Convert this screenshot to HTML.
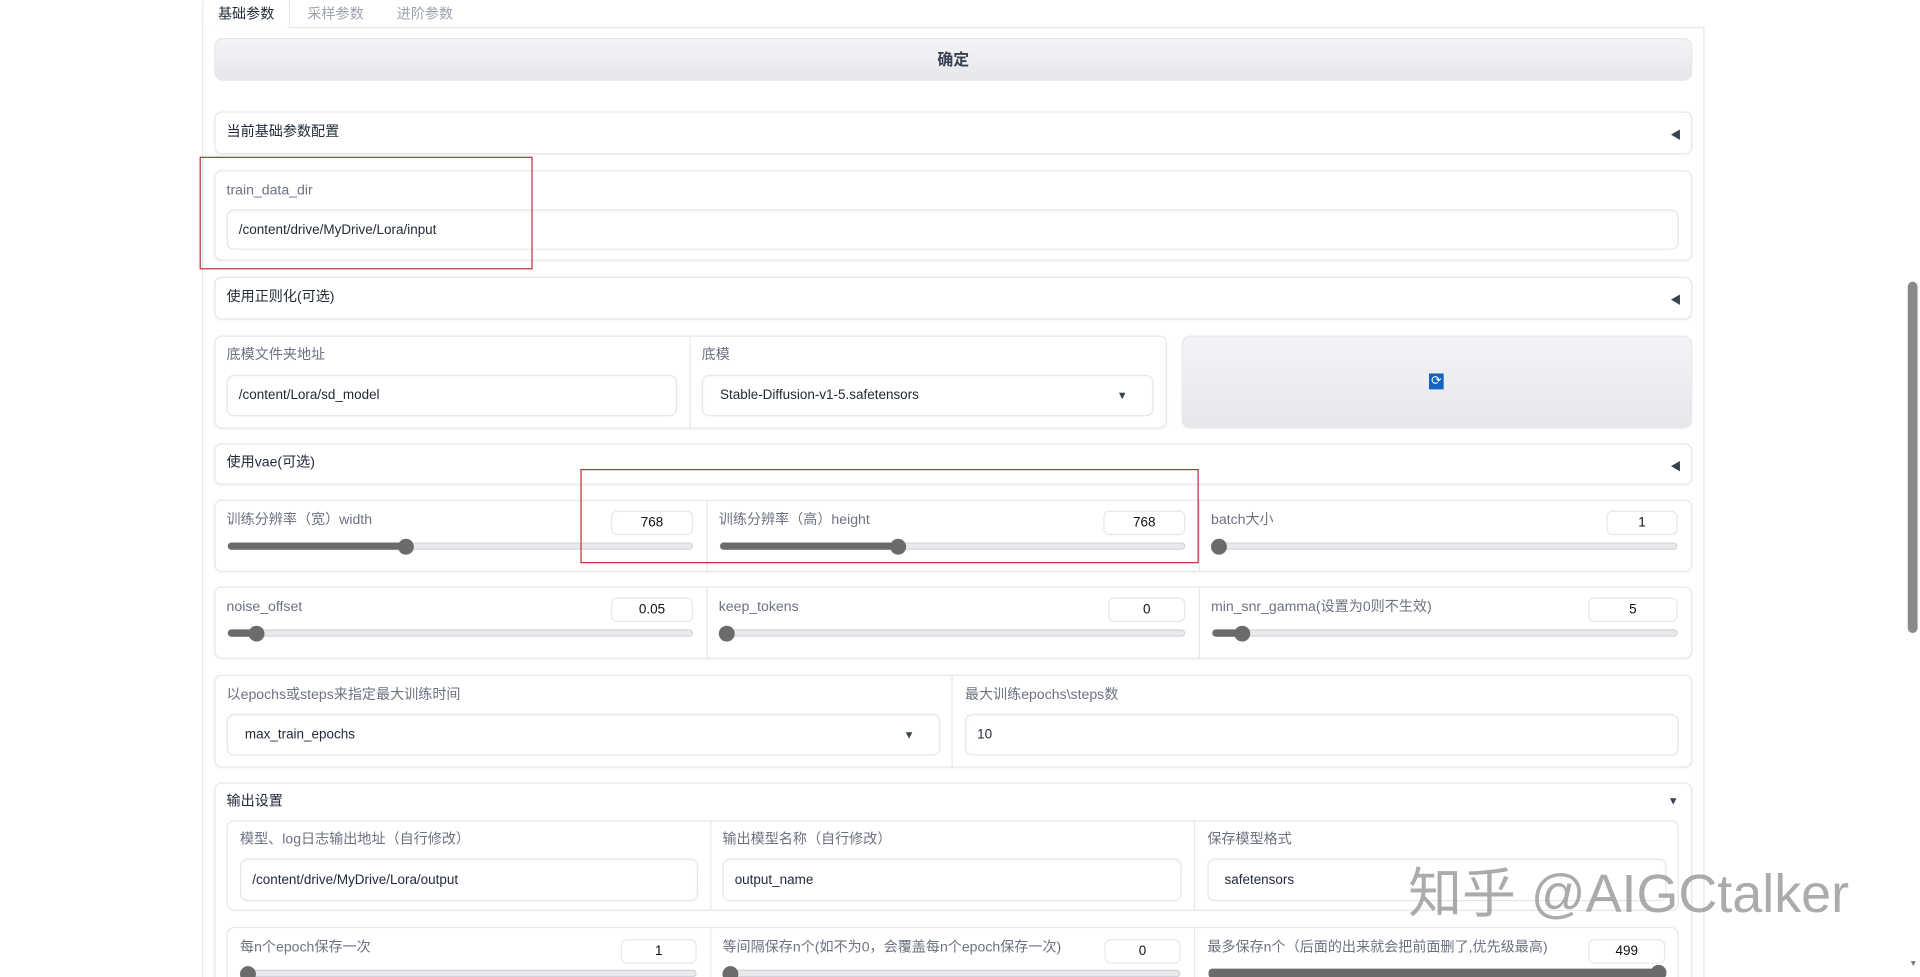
<!DOCTYPE html>
<html><head><meta charset="utf-8"><style>
*{box-sizing:border-box;margin:0;padding:0}
html,body{width:1920px;height:977px;overflow:hidden;background:#fff}
#w{position:absolute;left:0;top:0;width:1568px;height:798px;overflow:hidden;transform:scale(1.22449);transform-origin:0 0;font-family:"Liberation Sans","Noto Sans CJK SC",sans-serif;font-size:11.5px;color:#374151}
.a{position:absolute}
.box{position:absolute;border:1px solid #e5e7eb;border-radius:6px;background:#fff;box-shadow:0 1px 2px rgba(0,0,0,.04)}
.lbl{position:absolute;color:#6b7280;font-size:11.5px;line-height:14px}
.ttl{position:absolute;color:#1f2937;font-size:11.5px;line-height:14px}
.inp{position:absolute;border:1px solid #e5e7eb;border-radius:6px;background:#fff;color:#1f2937;font-size:11px;padding-left:9px;display:flex;align-items:center;box-shadow:inset 0 1px 2px rgba(0,0,0,.04)}
.num{position:absolute;border:1px solid #e5e7eb;border-radius:5px;height:20px;font-size:11px;color:#111;text-align:center;line-height:18px}
.trk{position:absolute;height:6px;border:1px solid #d1d5db;border-radius:3px;background:#e9eaec}
.fil{position:absolute;height:6px;border-radius:3px;background:#6b6b6b}
.th{position:absolute;width:13px;height:13px;border-radius:50%;background:#6b6b6b}
.vd{position:absolute;width:1px;background:#e5e7eb}
.tri{position:absolute;font-size:9px;color:#374151}
.red{position:absolute;border:1.5px solid #c0303a}
</style></head><body><div id="w">
<div class="a" style="left:165px;top:22px;width:1227px;height:790px;border-left:1px solid #e5e7eb;border-right:1px solid #e5e7eb"></div>
<div class="a" style="left:165px;top:22px;width:1227px;height:1px;background:#e5e7eb"></div>
<div class="a" style="left:165px;top:-2px;width:72px;height:25px;border:1px solid #e5e7eb;border-bottom:none;background:#fff;border-radius:4px 4px 0 0"></div>
<div class="a" style="left:178px;top:3px;color:#1f2937">基础参数</div>
<div class="a" style="left:251px;top:3px;color:#9ca3af">采样参数</div>
<div class="a" style="left:324px;top:3px;color:#9ca3af">进阶参数</div>
<div class="a" style="left:175px;top:31px;width:1207px;height:35px;border-radius:7px;background:linear-gradient(#f3f4f6,#e5e7eb);border:1px solid #e5e7eb;text-align:center;line-height:33px;font-weight:bold;font-size:13px;color:#374151">确定</div>
<div class="box" style="left:175px;top:91px;width:1207px;height:35px"></div>
<div class="ttl" style="left:185px;top:101px">当前基础参数配置</div><div class="tri" style="left:1364px;top:103px">◀</div>
<div class="box" style="left:175px;top:139px;width:1207px;height:74px"></div>
<div class="lbl" style="left:185px;top:149px">train_data_dir</div>
<div class="inp" style="left:185px;top:171px;width:1186px;height:33px">/content/drive/MyDrive/Lora/input</div>
<div class="red" style="left:163px;top:128px;width:272px;height:92px"></div>
<div class="box" style="left:175px;top:226px;width:1207px;height:35px"></div>
<div class="ttl" style="left:185px;top:236px">使用正则化(可选)</div><div class="tri" style="left:1364px;top:238px">◀</div>
<div class="box" style="left:175px;top:274px;width:778px;height:76px"></div>
<div class="vd" style="left:563px;top:275px;height:74px"></div>
<div class="lbl" style="left:185px;top:283px">底模文件夹地址</div>
<div class="inp" style="left:185px;top:306px;width:368px;height:34px">/content/Lora/sd_model</div>
<div class="lbl" style="left:573px;top:283px">底模</div>
<div class="inp" style="left:573px;top:306px;width:369px;height:34px;padding-left:14px">Stable-Diffusion-v1-5.safetensors</div>
<div class="tri" style="left:912px;top:318px">▼</div>
<div class="a" style="left:965px;top:274px;width:417px;height:76px;border-radius:7px;background:linear-gradient(#f3f4f6,#e5e7eb);border:1px solid #e5e7eb"></div>
<div class="a" style="left:1167px;top:305px;width:12px;height:13px;background:#1565c0;color:#fff;font-size:10px;line-height:13px;text-align:center">⟳</div>
<div class="box" style="left:175px;top:362px;width:1207px;height:34px"></div>
<div class="ttl" style="left:185px;top:371px">使用vae(可选)</div><div class="tri" style="left:1364px;top:374px">◀</div>
<div class="box" style="left:175px;top:408px;width:1207px;height:59px"></div>
<div class="vd" style="left:577px;top:409px;height:57px"></div><div class="vd" style="left:979px;top:409px;height:57px"></div>
<div class="lbl" style="left:185px;top:418px">训练分辨率（宽）width</div><div class="num" style="left:499px;top:417px;width:67px">768</div>
<div class="trk" style="left:186px;top:443px;width:380px"></div><div class="fil" style="left:186px;top:443px;width:146px"></div><div class="th" style="left:325px;top:440px"></div>
<div class="lbl" style="left:587px;top:418px">训练分辨率（高）height</div><div class="num" style="left:901px;top:417px;width:67px">768</div>
<div class="trk" style="left:588px;top:443px;width:380px"></div><div class="fil" style="left:588px;top:443px;width:146px"></div><div class="th" style="left:727px;top:440px"></div>
<div class="lbl" style="left:989px;top:418px">batch大小</div><div class="num" style="left:1312px;top:417px;width:58px">1</div>
<div class="trk" style="left:990px;top:443px;width:380px"></div><div class="th" style="left:989px;top:440px"></div>
<div class="red" style="left:474px;top:383px;width:505px;height:77px"></div>
<div class="box" style="left:175px;top:479px;width:1207px;height:59px"></div>
<div class="vd" style="left:577px;top:480px;height:57px"></div><div class="vd" style="left:979px;top:480px;height:57px"></div>
<div class="lbl" style="left:185px;top:489px">noise_offset</div><div class="num" style="left:499px;top:488px;width:67px">0.05</div>
<div class="trk" style="left:186px;top:514px;width:380px"></div><div class="fil" style="left:186px;top:514px;width:24px"></div><div class="th" style="left:203px;top:511px"></div>
<div class="lbl" style="left:587px;top:489px">keep_tokens</div><div class="num" style="left:905px;top:488px;width:63px">0</div>
<div class="trk" style="left:588px;top:514px;width:380px"></div><div class="th" style="left:587px;top:511px"></div>
<div class="lbl" style="left:989px;top:489px">min_snr_gamma(设置为0则不生效)</div><div class="num" style="left:1297px;top:488px;width:73px">5</div>
<div class="trk" style="left:990px;top:514px;width:380px"></div><div class="fil" style="left:990px;top:514px;width:26px"></div><div class="th" style="left:1008px;top:511px"></div>
<div class="box" style="left:175px;top:551px;width:1207px;height:76px"></div>
<div class="vd" style="left:777px;top:552px;height:74px"></div>
<div class="lbl" style="left:185px;top:561px">以epochs或steps来指定最大训练时间</div>
<div class="inp" style="left:185px;top:583px;width:583px;height:34px;padding-left:14px">max_train_epochs</div><div class="tri" style="left:738px;top:595px">▼</div>
<div class="lbl" style="left:788px;top:561px">最大训练epochs\steps数</div>
<div class="inp" style="left:788px;top:583px;width:583px;height:34px">10</div>
<div class="box" style="left:175px;top:639px;width:1207px;height:180px"></div>
<div class="ttl" style="left:185px;top:648px">输出设置</div><div class="tri" style="left:1362px;top:649px">▼</div>
<div class="box" style="left:185px;top:670px;width:1186px;height:74px;box-shadow:none"></div>
<div class="vd" style="left:580px;top:671px;height:72px"></div><div class="vd" style="left:975px;top:671px;height:72px"></div>
<div class="lbl" style="left:196px;top:679px">模型、log日志输出地址（自行修改）</div>
<div class="inp" style="left:196px;top:701px;width:374px;height:35px">/content/drive/MyDrive/Lora/output</div>
<div class="lbl" style="left:590px;top:679px">输出模型名称（自行修改）</div>
<div class="inp" style="left:590px;top:701px;width:375px;height:35px">output_name</div>
<div class="lbl" style="left:986px;top:679px">保存模型格式</div>
<div class="inp" style="left:986px;top:701px;width:375px;height:35px;padding-left:13px">safetensors</div>
<div class="box" style="left:185px;top:757px;width:1186px;height:60px;box-shadow:none"></div>
<div class="vd" style="left:580px;top:758px;height:45px"></div><div class="vd" style="left:975px;top:758px;height:45px"></div>
<div class="lbl" style="left:196px;top:767px">每n个epoch保存一次</div><div class="num" style="left:507px;top:767px;width:62px">1</div>
<div class="trk" style="left:197px;top:792px;width:372px"></div><div class="th" style="left:196px;top:789px"></div>
<div class="lbl" style="left:590px;top:767px">等间隔保存n个(如不为0，会覆盖每n个epoch保存一次)</div><div class="num" style="left:902px;top:767px;width:62px">0</div>
<div class="trk" style="left:591px;top:792px;width:373px"></div><div class="th" style="left:590px;top:789px"></div>
<div class="lbl" style="left:986px;top:767px">最多保存n个（后面的出来就会把前面删了,优先级最高)</div><div class="num" style="left:1297px;top:767px;width:63px">499</div>
<div class="fil" style="left:987px;top:791px;width:373px;height:8px"></div><div class="th" style="left:1348px;top:788px"></div>
<div class="a" style="left:1150px;top:704px;font-size:44px;line-height:54px;color:rgba(150,150,150,.8);white-space:nowrap">知乎 @AIGCtalker</div>
<div class="a" style="left:1558px;top:230px;width:8px;height:287px;border-radius:4px;background:#8a8a8a"></div>
<div class="tri" style="left:1559px;top:784px;font-size:7px;color:#777">▼</div>
</div></body></html>
